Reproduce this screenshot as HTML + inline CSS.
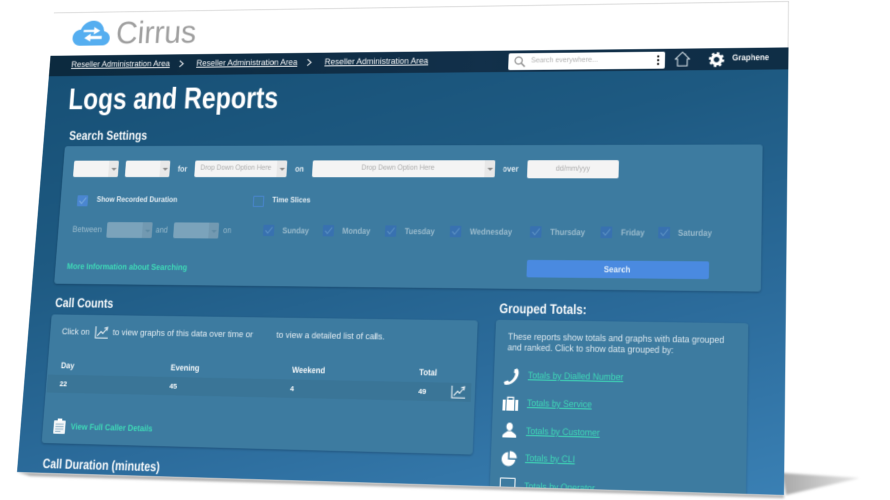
<!DOCTYPE html>
<html><head><meta charset="utf-8"><style>
html,body{margin:0;padding:0;width:890px;height:500px;overflow:hidden;background:#fff}
body{position:relative;font-family:"Liberation Sans",sans-serif}
#p{position:absolute;left:0;top:0;width:800px;height:500px;overflow:hidden;transform-origin:0 0;
transform:matrix3d(0.851809,-0.01446,0,-0.00008484,-0.075434,0.879198,0,-0.00008433,0,0,1,0,54,12.5,0,1);
background:linear-gradient(165deg,#154d72 0%,#1e5a82 40%,#2c6c9c 72%,#3a80b4 100%);filter:blur(.3px)}
#p div,#p svg{position:absolute}
.t{position:absolute;white-space:nowrap;line-height:12px;margin-top:-6px;transform-origin:0 50%;color:#fff}
.h{font-size:14px;font-weight:bold;transform:scaleX(.84)}
.l{font-size:9px;font-weight:bold;transform:scaleX(.88);color:#e8f0f5}
.d{font-size:9px;font-weight:bold;transform:scaleX(.89);color:#9dbdce}
.r{font-size:9px;transform:scaleX(1);color:#e6eff4}
.g{font-size:9px;font-weight:bold;transform:scaleX(.92);color:#3fdcb8}
.a{font-size:9.5px;transform:scaleX(.92);color:#3fdcb8;text-decoration:underline}
.c{font-size:9px;color:#fff;text-decoration:underline}
.panel{background:#3d7ba0;border-radius:3px;box-shadow:0 1px 2px rgba(0,20,40,.3)}
.s{background:#f4f4f4;border-radius:2px;height:18px;top:166px;overflow:hidden}
.s i{position:absolute;right:0;top:0;bottom:0;width:11px;background:#e8e8e8}
.s i:after{content:"";position:absolute;left:3px;top:8px;border:3px solid transparent;border-top:3px solid #888;border-bottom:0}
.s b{position:absolute;left:0;right:11px;top:0;line-height:16px;text-align:center;font-size:8px;font-weight:normal;color:#aaa;transform:scaleX(.92)}
.s2{background:#7ba3bb;top:233px;height:17px}
.s2 i{background:#7299b1}
.s2 i:after{border-top-color:#5f8aa3}
.k{width:12px;height:12px;background:#3871b0;border-radius:1px;top:235px}
.k svg{left:1px;top:1px}
</style></head><body>
<svg width="890" height="500" style="position:absolute;left:0;top:0">
<defs><filter id="b"><feGaussianBlur stdDeviation="1.2"/></filter>
<linearGradient id="sg" x1="0" x2="1" y1="0" y2="0"><stop offset="0" stop-color="#a8a8a8"/><stop offset="1" stop-color="#e6e6e6"/></linearGradient></defs>
<polygon points="782,473 860,478 786,495" fill="url(#sg)" filter="url(#b)"/>
<polygon points="17,472 784,495 784,498 30,476" fill="#aaa" filter="url(#b)"/>
<polygon points="54,12.5 789,1 789,3 54,14" fill="#ddd"/>
</svg>
<div id="p">
<div style="left:0;top:0;width:800px;height:49px;background:#fff;border-top:1px solid #ddd;box-sizing:border-box"></div>
<div style="right:0;top:0;width:1px;height:49px;background:#ddd"></div>
<svg style="left:24px;top:10px" width="43" height="28" viewBox="0 0 43 28"><path d="M9 28C3 28 0 23 0 19C0 14 4 10 9 10C11 4 17 0 23 0C30 0 35 5 36 12C40 13 43 16 43 20C43 25 39 28 35 28Z" fill="#55aef0"/><path d="M12 10H24V6.500L32 11.500L24 16V13H12Z M34 17H21V14L13 19.500L21 24V21H34Z" fill="#fff" stroke="#55aef0" stroke-width=".6"/></svg>
<span class="t" style="left:74px;top:25px;font-size:35px;color:#9f9f9f;transform:scaleX(.98)">Cirrus</span>

<div style="left:0;top:49px;width:800px;height:23px;background:linear-gradient(90deg,#0c2a3f,#12304a 60%,#0f2e46)"></div>
<span class="t c" style="left:25px;top:59px">Reseller Administration Area</span>
<svg style="left:148px;top:55px" width="6" height="9"><path d="M1 1L5 4.500L1 8" fill="none" stroke="#fff" stroke-width="1.100"/></svg>
<span class="t c" style="left:168px;top:59px">Reseller Administration Area</span>
<svg style="left:291px;top:55px" width="6" height="9"><path d="M1 1L5 4.500L1 8" fill="none" stroke="#fff" stroke-width="1.100"/></svg>
<span class="t c" style="left:311px;top:59px">Reseller Administration Area</span>
<div style="left:510px;top:52px;width:164px;height:18px;background:#fff;border-radius:2px"></div>
<svg style="left:516px;top:55px" width="12" height="12" viewBox="0 0 12 12"><circle cx="4.800" cy="4.800" r="3.800" fill="none" stroke="#888" stroke-width="1.200"/><path d="M7.500 7.500L11.500 11.500" stroke="#888" stroke-width="1.400"/></svg>
<span class="t" style="left:534px;top:60px;font-size:8px;color:#b0b0b0;transform:scaleX(.93)">Search everywhere...</span>
<svg style="left:665px;top:55px" width="4" height="12"><circle cx="2" cy="2" r="1.200" fill="#222"/><circle cx="2" cy="6" r="1.200" fill="#222"/><circle cx="2" cy="10" r="1.200" fill="#222"/></svg>
<svg style="left:684px;top:52px" width="16" height="16" viewBox="0 0 16 16"><path d="M.7 8L8 .8L15.300 8H13V15.300H3V8Z M11 2.500V4" fill="none" stroke="#dfe8ee" stroke-width="1"/></svg>
<svg style="left:719px;top:53px" width="16" height="16" viewBox="0 0 16 16"><circle cx="8" cy="8" r="4.500" fill="none" stroke="#fff" stroke-width="3.200"/><circle cx="8" cy="8" r="6.500" fill="none" stroke="#fff" stroke-width="2.800" stroke-dasharray="2.550 2.550"/></svg>
<span class="t" style="left:743px;top:59px;font-size:9px;font-weight:bold;transform:scaleX(.89)">Graphene</span>

<span class="t" style="left:25px;top:98px;font-size:33px;font-weight:bold;transform:scaleX(.845)">Logs and Reports</span>
<span class="t h" style="left:29px;top:138px">Search Settings</span>

<div class="panel" style="left:25px;top:150px;width:750px;height:150px"></div>
<div class="s" style="left:37px;width:51px"><i></i></div>
<div class="s" style="left:96px;width:50px"><i></i></div>
<span class="t l" style="left:155px;top:175px">for</span>
<div class="s" style="left:174px;width:102px"><b>Drop Down Option Here</b><i></i></div>
<span class="t l" style="left:285px;top:175px">on</span>
<div class="s" style="left:304px;width:196px"><b>Drop Down Option Here</b><i></i></div>
<span class="t l" style="left:508px;top:175px">over</span>
<div class="s" style="left:534px;width:95px;height:19px"><b style="right:0;line-height:18px">dd/mm/yyy</b></div>

<div style="left:44px;top:204px;width:12px;height:12px;background:#4a86d0;border-radius:1px"><svg style="left:1px;top:1px" width="10" height="10"><path d="M1.500 5L4 8L9 1.500" fill="none" stroke="#7fb0e0" stroke-width="1"/></svg></div>
<span class="t l" style="left:66px;top:209px;font-size:8px;transform:scaleX(.95)">Show Recorded Duration</span>
<div style="left:241px;top:204px;width:12px;height:12px;box-sizing:border-box;border:1px solid #4a86d0;border-radius:1px"></div>
<span class="t l" style="left:262px;top:209px;font-size:8px;transform:scaleX(.95)">Time Slices</span>

<span class="t d" style="left:41px;top:241px;font-weight:normal;transform:scaleX(.95)">Between</span>
<div class="s s2" style="left:80px;width:51px"><i></i></div>
<span class="t d" style="left:135px;top:241px;font-weight:normal">and</span>
<div class="s s2" style="left:155px;width:50px"><i></i></div>
<span class="t d" style="left:210px;top:241px;font-weight:normal">on</span>

<div class="k" style="left:254px"><svg width="10" height="10"><path d="M1.500 5L4 8L9 1.500" fill="none" stroke="#5f94c6"/></svg></div>
<span class="t d" style="left:275px;top:241px">Sunday</span>
<div class="k" style="left:319px"><svg width="10" height="10"><path d="M1.500 5L4 8L9 1.500" fill="none" stroke="#5f94c6"/></svg></div>
<span class="t d" style="left:340px;top:241px">Monday</span>
<div class="k" style="left:386px"><svg width="10" height="10"><path d="M1.500 5L4 8L9 1.500" fill="none" stroke="#5f94c6"/></svg></div>
<span class="t d" style="left:407px;top:241px">Tuesday</span>
<div class="k" style="left:455px"><svg width="10" height="10"><path d="M1.500 5L4 8L9 1.500" fill="none" stroke="#5f94c6"/></svg></div>
<span class="t d" style="left:476px;top:241px">Wednesday</span>
<div class="k" style="left:539px"><svg width="10" height="10"><path d="M1.500 5L4 8L9 1.500" fill="none" stroke="#5f94c6"/></svg></div>
<span class="t d" style="left:560px;top:241px">Thursday</span>
<div class="k" style="left:612px"><svg width="10" height="10"><path d="M1.500 5L4 8L9 1.500" fill="none" stroke="#5f94c6"/></svg></div>
<span class="t d" style="left:633px;top:241px">Friday</span>
<div class="k" style="left:671px"><svg width="10" height="10"><path d="M1.500 5L4 8L9 1.500" fill="none" stroke="#5f94c6"/></svg></div>
<span class="t d" style="left:691px;top:241px">Saturday</span>

<span class="t g" style="left:38px;top:281px">More Information about Searching</span>
<div style="left:537px;top:270px;width:186px;height:18px;background:#4a8ae0;border-radius:2px"></div>
<span class="t" style="left:537px;top:279px;width:186px;text-align:center;font-size:9px;font-weight:bold;transform-origin:50% 50%;transform:scaleX(.9);color:#e8f2fb">Search</span>

<span class="t h" style="left:28px;top:320px">Call Counts</span>
<div class="panel" style="left:25px;top:333px;width:463px;height:136px"></div>
<span class="t r" style="left:38px;top:351px;transform:scaleX(.97)">Click on</span>
<svg style="left:75px;top:345px" width="15" height="13" viewBox="0 0 15 13"><path d="M1 0V12.300H15M3 10L7 5.500L9 7.500L13 2.500M10.500 2L14 1L13.500 4.500" fill="none" stroke="#fff" stroke-width="1"/></svg>
<span class="t r" style="left:95px;top:351px">to view graphs of this data over time or</span>
<span class="t r" style="left:275px;top:351px">to view a detailed list of calls.</span>

<span class="t" style="left:40px;top:387px;font-size:9px;font-weight:bold;transform:scaleX(.9)">Day</span>
<span class="t" style="left:162px;top:387px;font-size:9px;font-weight:bold;transform:scaleX(.9)">Evening</span>
<span class="t" style="left:294px;top:387px;font-size:9px;font-weight:bold;transform:scaleX(.9)">Weekend</span>
<span class="t" style="left:429px;top:387px;font-size:9px;font-weight:bold;transform:scaleX(.9)">Total</span>
<div style="left:26px;top:397px;width:458px;height:19px;background:#3a7597"></div>
<span class="t" style="left:40px;top:407px;font-size:7.500px;font-weight:bold">22</span>
<span class="t" style="left:162px;top:407px;font-size:7.500px;font-weight:bold">45</span>
<span class="t" style="left:293px;top:407px;font-size:7.500px;font-weight:bold">4</span>
<span class="t" style="left:429px;top:407px;font-size:7.500px;font-weight:bold">49</span>
<svg style="left:463px;top:400px" width="15" height="13" viewBox="0 0 15 13"><path d="M1 0V12.300H15M3 10L7 5.500L9 7.500L13 2.500M10.500 2L14 1L13.500 4.500" fill="none" stroke="#fff" stroke-width="1"/></svg>
<svg style="left:36px;top:443px" width="15" height="16" viewBox="0 0 15 16"><rect x="1" y="2" width="13" height="14" rx="1" fill="#f2f6f8"/><rect x="5" y="0" width="5" height="3.500" fill="#fff"/><path d="M3 6H12M3 8.500H12M3 11H12M3 13.500H9" stroke="#8fb2c8" stroke-width="1"/></svg>
<span class="t g" style="left:56px;top:451px">View Full Caller Details</span>

<span class="t h" style="left:28px;top:490px">Call Duration (minutes)</span>

<span class="t h" style="left:510px;top:320px">Grouped Totals:</span>
<div class="panel" style="left:507px;top:332px;width:256px;height:180px"></div>
<span class="t r" style="left:520px;top:350px;font-size:9.500px;transform:scaleX(.925)">These reports show totals and graphs with data grouped</span>
<span class="t r" style="left:520px;top:361px;font-size:9.500px;transform:scaleX(.925)">and ranked. Click to show data grouped by:</span>

<svg style="left:517px;top:381px" width="17" height="17" viewBox="0 0 17 17"><path d="M11 1L13.500 0C17 3 15.500 10 10.500 14C7 17 3 17.500 1 16.500L.5 14L4.500 12.500L6 14C9 12.500 11.500 9 12 5.500L10.500 4.500Z" fill="#fff"/></svg>
<span class="t a" style="left:542px;top:389px">Totals by Dialled Number</span>
<svg style="left:517px;top:409px" width="16" height="15" viewBox="0 0 16 15"><path d="M5 4V1.500H11V4" fill="none" stroke="#fff" stroke-width="1.200"/><rect x="0" y="4" width="3" height="11" fill="#fff"/><rect x="4" y="4" width="8" height="11" fill="#fff"/><rect x="13" y="4" width="3" height="11" fill="#fff"/></svg>
<span class="t a" style="left:542px;top:417px">Totals by Service</span>
<svg style="left:517px;top:436px" width="16" height="15" viewBox="0 0 16 15"><ellipse cx="8" cy="4" rx="3.300" ry="4" fill="#fff"/><path d="M1 15C0 11.500 4 10.500 6 8.500H10C12 10.500 16 11.500 15 15Z" fill="#fff"/></svg>
<span class="t a" style="left:542px;top:445px">Totals by Customer</span>
<svg style="left:517px;top:464px" width="17" height="16" viewBox="0 0 17 16"><path d="M7.500 1.500A7 7 0 1 0 15 9H7.500Z" fill="#fff"/><path d="M9 .5A7 7 0 0 1 16.500 7.500H9Z" fill="#fff"/></svg>
<span class="t a" style="left:542px;top:472px">Totals by CLI</span>
<div style="left:517px;top:491px;width:16px;height:16px;box-sizing:border-box;border:1.500px solid #fff;border-radius:1px"></div>
<span class="t a" style="left:542px;top:500px">Totals by Operator</span>
</div>
</body></html>
